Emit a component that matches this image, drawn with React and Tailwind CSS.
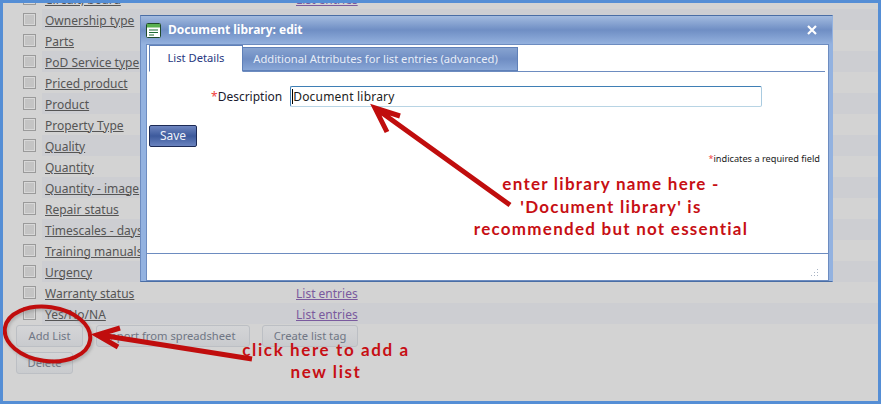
const rows = [
  "Circuit, board",
  "Ownership type",
  "Parts",
  "PoD Service type",
  "Priced product",
  "Product",
  "Property Type",
  "Quality",
  "Quantity",
  "Quantity - image",
  "Repair status",
  "Timescales - days",
  "Training manuals",
  "Urgency",
  "Warranty status",
  "Yes/No/NA",
];

const Row = ({ name, striped }) => (
  <div className="flex h-[21px] items-center">
    <span className="ml-[20px] mr-[6px] size-[13px] border border-[#9a9a9a] bg-[#c4c4c4] shadow-[inset_0_0_0_1px_#d8d8d8]" />
    <div className={`flex h-full flex-1 items-center pl-[3px] pt-[2px] ${striped ? "bg-[#cdced2]" : ""}`}>
      <a className="w-[251px] text-[#555555] underline">{name}</a>
      <a className="text-[#7a5a9e] underline">List entries</a>
    </div>
  </div>
);

const GreyButton = ({ children, className }) => (
  <button className={`h-[22px] rounded-[3px] border border-[#bcbfc4] bg-gradient-to-b from-[#d4d5d7] to-[#c9cbce] text-[11.2px] text-[#6f7684] ${className}`}>
    {children}
  </button>
);

const Background = () => (
  <div className="-mt-[15px] flex flex-col">
    {rows.map((name, i) => (
      <Row key={name} name={name} striped={i % 2 === 1} />
    ))}
    <div className="ml-[13px] mt-[1px] flex">
      <GreyButton className="w-[67px]">Add List</GreyButton>
      <GreyButton className="ml-[13px] w-[154px] pr-[8px]">Import from spreadsheet</GreyButton>
      <GreyButton className="ml-[12px] w-[96px]">Create list tag</GreyButton>
    </div>
    <div className="ml-[13px] mt-[5px]">
      <GreyButton className="w-[57px]">Delete</GreyButton>
    </div>
  </div>
);

const WindowIcon = () => (
  <svg width="15" height="15" viewBox="0 0 15 15" className="shrink-0">
    <rect x="0.5" y="0.5" width="14" height="14" rx="1" fill="#fff" stroke="#1f4a2a" />
    <rect x="1" y="1" width="13" height="3.5" fill="#58b04f" />
    <path d="M3 7h9M3 9.5h9M3 12h5" stroke="#1d6b34" strokeWidth="1.2" />
  </svg>
);

const Dialog = () => (
  <div className="absolute left-[137px] top-[12px] flex h-[267px] w-[693px] flex-col border border-t-[#4a6ea5] border-b-[#4a6ea5] border-l-[#6d8cc0] border-r-[#93b2e0] bg-[#93b2e0]">
    <div className="flex h-[28px] items-center bg-gradient-to-b from-[#a3bbdf] via-[#6f8ec4] to-[#94b1de] pl-[5px] pr-[15px] font-bold text-white">
      <WindowIcon />
      <span className="ml-[7px] flex-1">Document library: edit</span>
      <svg width="10" height="10" viewBox="0 0 10 10">
        <path d="M1 1l8 8M9 1l-8 8" stroke="#fff" strokeWidth="2.2" />
      </svg>
    </div>
    <div className="ml-[5px] mr-[3px] flex flex-1 flex-col border border-[#6d8cc0] bg-white">
      <div className="flex h-[208px] flex-col pl-[2px] pr-[3px]">
        <div className="flex h-[27px] items-end border-b border-[#6d8cc0] text-[11.2px]">
          <div className="-mb-[1px] flex h-[27px] w-[94px] items-center justify-center border border-b-white border-[#5f80b8] text-[#27377f]">List Details</div>
          <div className="flex h-[24px] w-[275px] items-center justify-center border-y border-r border-[#5f80b8] bg-gradient-to-b from-[#87a3d0] via-[#6f8dc3] to-[#88a6d6] pr-[9px] text-[#e8eef8]">Additional Attributes for list entries (advanced)</div>
        </div>
        <div className="mt-[14px] flex h-[21px] items-center">
          <span className="ml-[62px] text-[#f04040]">*</span>
          <span className="text-[#1a1a2e]">Description</span>
          <div className="ml-[8px] flex h-[21px] w-[472px] items-center rounded-[2px] border border-t-[#3f7fb5] border-l-[#3f7fb5] border-r-[#a9cbe0] border-b-[#b8d4e4] pl-[1px] tracking-[0.2px] text-[#222222]">
            <span className="h-[15px] w-px bg-black" />
            Document library
          </div>
        </div>
        <button className="mt-[18px] h-[22px] w-[48px] rounded-[2px] border border-[#1c2a55] bg-gradient-to-b from-[#6f86c0] via-[#3d5a9c] to-[#6a83bf] text-[#eef2fa]">Save</button>
        <div className="mt-[6px] pr-[5px] text-right text-[9.2px] leading-[12px] text-[#1a1a1a]">
          <span className="text-[#f04040]">*</span>indicates a required field
        </div>
      </div>
      <div className="relative flex-1 border-t border-[#6d8cc0]">
        <svg width="9" height="9" viewBox="0 0 9 9" className="absolute bottom-[3px] right-[9px]">
          <path d="M7 1h1v1H7zM4 4h1v1H4zM7 4h1v1H7zM1 7h1v1H1zM4 7h1v1H4zM7 7h1v1H7z" fill="#a9b4c4" />
        </svg>
      </div>
    </div>
  </div>
);

const Annotations = () => (
  <>
    <svg width="881" height="404" viewBox="0 0 881 404" className="pointer-events-none absolute -left-[3px] -top-[3px]">
      <ellipse cx="49" cy="336" rx="43" ry="27" transform="rotate(8 49 336)" fill="none" stroke="#808080" strokeWidth="4" opacity="0.45" filter="blur(1.5px)" />
      <ellipse cx="47.5" cy="334" rx="43" ry="27" transform="rotate(8 47.5 334)" fill="none" stroke="#c00d0d" strokeWidth="4" />
      <path d="M510 205L378 110M400 116L375 108L387 132" fill="none" stroke="#c00d0d" strokeWidth="5" />
      <path d="M252 359L100 335M120 328L97 335L118 347" fill="none" stroke="#c00d0d" strokeWidth="5" />
    </svg>
    <div className="absolute left-[458px] top-[170px] w-[300px] text-center text-[17px] leading-[22.5px] font-bold tracking-[1.25px] text-[#c70f14] [font-family:'Lato',sans-serif]">
      <div>enter library name here -</div>
      <div>'Document library' is</div>
      <div>recommended but not essential</div>
    </div>
    <div className="absolute left-[223px] top-[336px] w-[200px] text-center text-[17px] leading-[22px] font-bold tracking-[1.6px] text-[#c70f14] [font-family:'Lato',sans-serif]">
      <div>click here to add a</div>
      <div>new list</div>
    </div>
  </>
);

export default function App() {
  return (
    <div className="relative h-[404px] w-[881px] overflow-hidden border-[3px] border-[#558ed5] bg-[#d3d3d3] text-[12px] [font-family:'Noto_Sans',sans-serif]">
      <Background />
      <Dialog />
      <Annotations />
    </div>
  );
}
